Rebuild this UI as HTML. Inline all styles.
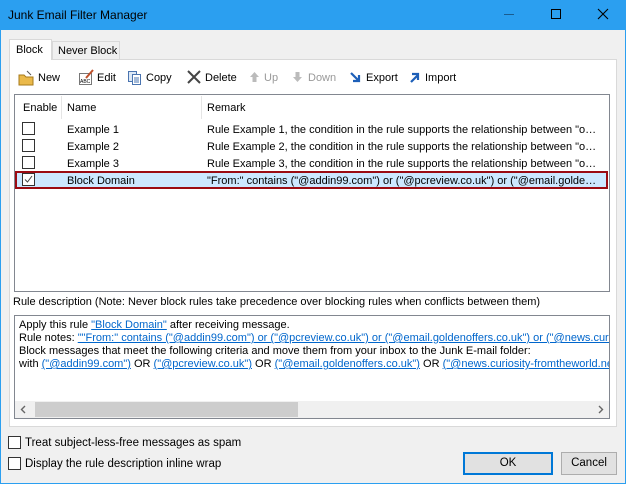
<!DOCTYPE html>
<html><head><style>
*{box-sizing:border-box;margin:0;padding:0}
body{width:626px;height:484px;overflow:hidden;background:#2b9ff0;font-family:"Liberation Sans",sans-serif;font-size:11px;color:#000;position:relative}
.a{position:absolute;white-space:nowrap}
#win{position:absolute;left:1px;top:30px;width:624px;height:453px;background:#f0f0f0}
.cb{position:absolute;width:13px;height:13px;border:1px solid #333;background:#fff}
a{color:#0066cc;text-decoration:underline}
.btn{position:absolute;background:#e1e1e1;border:1px solid #adadad;text-align:center;line-height:20px;font-size:11.5px}
.rm{width:392px;overflow:hidden;text-overflow:ellipsis}
</style></head><body>
<div class="a" style="left:8px;top:8px;font-size:12px;color:#000">Junk Email Filter Manager</div>
<div class="a" style="left:504px;top:14px;width:10px;height:1px;background:#1a5c8f"></div>
<div class="a" style="left:551px;top:9px;width:10px;height:10px;border:1px solid #000"></div>
<svg class="a" style="left:597px;top:8px" width="12" height="12"><path d="M1 1L11 11M11 1L1 11" stroke="#000" stroke-width="1.1"/></svg>
<div id="win"></div>
<!-- tabs -->
<div class="a" style="left:9px;top:59px;width:608px;height:368px;background:#fff;border:1px solid #d9d9d9"></div>
<div class="a" style="left:9px;top:39px;width:43px;height:21px;background:#fff;border:1px solid #d9d9d9;border-bottom:none;padding:4px 0 0 6px">Block</div>
<div class="a" style="left:52px;top:41px;width:68px;height:18px;background:#f0f0f0;border:1px solid #d9d9d9;border-bottom:none;padding:3px 0 0 5px">Never Block</div>
<!-- toolbar -->
<svg class="a" style="left:18px;top:70px" width="16" height="16"><path d="M1 5h5l2 2h7v8H1z" fill="#eab94a" stroke="#a77a1a"/><path d="M9 1l4 4" stroke="#555"/></svg>
<div class="a" style="left:38px;top:72px">New</div>
<svg class="a" style="left:78px;top:69px" width="16" height="17"><rect x="1.5" y="4.5" width="12" height="11" fill="#fff" stroke="#777"/><text x="2" y="14" font-size="5" font-family="Liberation Sans">ABC</text><path d="M8 9L15 1" stroke="#c0502a" stroke-width="2"/></svg>
<div class="a" style="left:97px;top:72px">Edit</div>
<svg class="a" style="left:127px;top:70px" width="16" height="16"><rect x="1.5" y="1.5" width="8" height="10" fill="#dce8f6" stroke="#4a74b0"/><rect x="5.5" y="4.5" width="8" height="10" fill="#fff" stroke="#4a74b0"/><path d="M7 8h5M7 10h5M7 12h5" stroke="#4a74b0"/></svg>
<div class="a" style="left:146px;top:72px">Copy</div>
<svg class="a" style="left:187px;top:70px" width="14" height="14"><path d="M1 1L13 13M13 1L1 13" stroke="#444" stroke-width="2"/></svg>
<div class="a" style="left:205px;top:72px">Delete</div>
<svg class="a" style="left:249px;top:71px" width="11" height="12"><path d="M5.5 1L10 6H7.5v5h-4V6H1z" fill="#bbb"/></svg>
<div class="a" style="left:264px;top:72px;color:#999">Up</div>
<svg class="a" style="left:292px;top:71px" width="11" height="12"><path d="M5.5 11L10 6H7.5V1h-4v5H1z" fill="#bbb"/></svg>
<div class="a" style="left:308px;top:72px;color:#999">Down</div>
<svg class="a" style="left:349px;top:71px" width="13" height="13"><path d="M2 2l7 7M10 4v6H4" stroke="#1d5fb8" stroke-width="2.2" fill="none"/></svg>
<div class="a" style="left:366px;top:72px">Export</div>
<svg class="a" style="left:408px;top:71px" width="13" height="13"><path d="M3 11l7-7M4 3h6v6" stroke="#1d5fb8" stroke-width="2.2" fill="none"/></svg>
<div class="a" style="left:425px;top:72px">Import</div>
<!-- list -->
<div class="a" style="left:14px;top:94px;width:596px;height:198px;background:#fff;border:1px solid #828790"></div>
<div class="a" style="left:23px;top:102px">Enable</div>
<div class="a" style="left:61px;top:96px;width:1px;height:23px;background:#e5e5e5"></div>
<div class="a" style="left:67px;top:102px">Name</div>
<div class="a" style="left:201px;top:96px;width:1px;height:23px;background:#e5e5e5"></div>
<div class="a" style="left:207px;top:102px">Remark</div>
<div class="a" style="left:15px;top:171px;width:593px;height:18px;background:#cce8ff;border:2px solid #9b0b12"></div>
<div class="cb" style="left:22px;top:122px"></div>
<div class="cb" style="left:22px;top:139px"></div>
<div class="cb" style="left:22px;top:156px"></div>
<svg class="a" style="left:22px;top:173px" width="13" height="13"><rect x=".5" y=".5" width="12" height="12" fill="#fff" stroke="#333"/><path d="M3 6.5l2.5 2.5L10 3" stroke="#444" fill="none"/></svg>
<div class="a" style="left:67px;top:124px">Example 1</div>
<div class="a" style="left:67px;top:141px">Example 2</div>
<div class="a" style="left:67px;top:158px">Example 3</div>
<div class="a" style="left:67px;top:175px">Block Domain</div>
<div class="a rm" style="left:207px;top:124px">Rule Example 1, the condition in the rule supports the relationship between "or" and "and"</div>
<div class="a rm" style="left:207px;top:141px">Rule Example 2, the condition in the rule supports the relationship between "or" and "and"</div>
<div class="a rm" style="left:207px;top:158px">Rule Example 3, the condition in the rule supports the relationship between "or" and "and"</div>
<div class="a rm" style="left:207px;top:175px">"From:" contains ("@addin99.com") or ("@pcreview.co.uk") or ("@email.goldenoffers.co.uk")</div>
<!-- description -->
<div class="a" style="left:13px;top:296px">Rule description (Note: Never block rules take precedence over blocking rules when conflicts between them)</div>
<div class="a" style="left:14px;top:315px;width:596px;height:104px;background:#fff;border:1px solid #828790;overflow:hidden">
<div class="a" style="left:4px;top:3px;line-height:13px">Apply this rule <a>"Block Domain"</a> after receiving message.<br>Rule notes: <a>""From:" contains ("@addin99.com") or ("@pcreview.co.uk") or ("@email.goldenoffers.co.uk") or ("@news.curiosity</a><br>Block messages that meet the following criteria and move them from your inbox to the Junk E-mail folder:<br>with <a>("@addin99.com")</a> OR <a>("@pcreview.co.uk")</a> OR <a>("@email.goldenoffers.co.uk")</a> OR <a>("@news.curiosity-fromtheworld.net</a></div>
<div class="a" style="left:0;top:85px;width:594px;height:17px;background:#f0f0f0"></div>
<div class="a" style="left:20px;top:86px;width:263px;height:15px;background:#cdcdcd"></div>
<svg class="a" style="left:5px;top:89px" width="6" height="9"><path d="M5 1L1.5 4.5L5 8" stroke="#666" stroke-width="1.4" fill="none"/></svg>
<svg class="a" style="left:583px;top:89px" width="6" height="9"><path d="M1 1L4.5 4.5L1 8" stroke="#666" stroke-width="1.4" fill="none"/></svg>
</div>
<!-- bottom -->
<div class="cb" style="left:8px;top:436px;border-color:#333"></div>
<div class="a" style="left:25px;top:437px;font-size:11.5px">Treat subject-less-free messages as spam</div>
<div class="cb" style="left:8px;top:457px;border-color:#333"></div>
<div class="a" style="left:25px;top:458px;font-size:11.5px">Display the rule description inline wrap</div>
<div class="btn" style="left:463px;top:452px;width:90px;height:23px;border:2px solid #0078d7;line-height:19px">OK</div>
<div class="btn" style="left:561px;top:452px;width:56px;height:23px">Cancel</div>
</body></html>
